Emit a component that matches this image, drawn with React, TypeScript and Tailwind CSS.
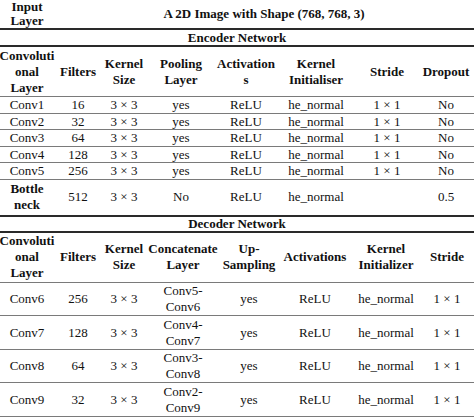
import React from "react";

const encCols = "grid grid-cols-[54px_48px_44px_70px_60px_80px_62px_56px]";
const decCols = "grid grid-cols-[54px_48px_44px_74px_58px_74px_68px_54px]";

const thick = "border-b-2 border-[#2a2a2a]";
const thin = "border-b border-[#7a7a7a]";

type Cell = React.ReactNode;

function Row({ cols, cells, className, bold }: { cols: string; cells: Cell[]; className: string; bold?: boolean }) {
  return (
    <div className={`${cols} ${className}`}>
      {cells.map((c, i) => (
        <div key={i} className={`flex items-center justify-center text-center ${bold ? "font-bold" : ""}`}>
          <span>{c}</span>
        </div>
      ))}
    </div>
  );
}

const encoderRows: Cell[][] = [
  ["Conv1", "16", "3 × 3", "yes", "ReLU", "he_normal", "1 × 1", "No"],
  ["Conv2", "32", "3 × 3", "yes", "ReLU", "he_normal", "1 × 1", "No"],
  ["Conv3", "64", "3 × 3", "yes", "ReLU", "he_normal", "1 × 1", "No"],
  ["Conv4", "128", "3 × 3", "yes", "ReLU", "he_normal", "1 × 1", "No"],
  ["Conv5", "256", "3 × 3", "yes", "ReLU", "he_normal", "1 × 1", "No"],
];

const decoderRows: Cell[][] = [
  ["Conv6", "256", "3 × 3", <>Conv5-<br />Conv6</>, "yes", "ReLU", "he_normal", "1 × 1"],
  ["Conv7", "128", "3 × 3", <>Conv4-<br />Conv7</>, "yes", "ReLU", "he_normal", "1 × 1"],
  ["Conv8", "64", "3 × 3", <>Conv3-<br />Conv8</>, "yes", "ReLU", "he_normal", "1 × 1"],
  ["Conv9", "32", "3 × 3", <>Conv2-<br />Conv9</>, "yes", "ReLU", "he_normal", "1 × 1"],
];

export default function App() {
  return (
    <div
      className="w-[474px] h-[417px] overflow-hidden bg-white text-[#111111] text-[13px] leading-[16px]"
      style={{ fontFamily: '"Liberation Serif", "Times New Roman", serif' }}
    >
      {/* Input row */}
      <div className={`flex h-[30px] ${thick}`}>
        <div className="w-[54px] flex items-center justify-center text-center font-bold leading-[14px]">
          <span>Input<br />Layer</span>
        </div>
        <div className="flex-1 flex items-center justify-center font-bold">
          A 2D Image with Shape (768, 768, 3)
        </div>
      </div>

      {/* Encoder */}
      <div className={`h-[17px] flex items-center justify-center font-bold ${thick}`}>Encoder Network</div>
      <Row
        cols={encCols}
        bold
        className={`h-[50px] ${thin}`}
        cells={[
          <>Convoluti<br />onal<br />Layer</>,
          "Filters",
          <>Kernel<br />Size</>,
          <>Pooling<br />Layer</>,
          <>Activation<br />s</>,
          <>Kernel<br />Initialiser</>,
          "Stride",
          "Dropout",
        ]}
      />
      {encoderRows.map((r, i) => (
        <Row key={i} cols={encCols} className={`h-[16.6px] ${thin}`} cells={r} />
      ))}
      <div className={`${encCols} h-[37px] ${thick}`}>
        <div className="flex items-center justify-center text-center font-bold">
          <span>Bottle<br />neck</span>
        </div>
        {["512", "3 × 3", "No", "ReLU", "he_normal", "", "0.5"].map((c, i) => (
          <div key={i} className="flex items-center justify-center">{c}</div>
        ))}
      </div>

      {/* Decoder */}
      <div className={`h-[16px] flex items-center justify-center font-bold ${thick}`}>Decoder Network</div>
      <Row
        cols={decCols}
        bold
        className={`h-[50px] ${thin}`}
        cells={[
          <>Convoluti<br />onal<br />Layer</>,
          "Filters",
          <>Kernel<br />Size</>,
          <>Concatenate<br />Layer</>,
          <>Up-<br />Sampling</>,
          "Activations",
          <>Kernel<br />Initializer</>,
          "Stride",
        ]}
      />
      {decoderRows.map((r, i) => (
        <Row key={i} cols={decCols} className={`h-[33.5px] ${thin}`} cells={r} />
      ))}
    </div>
  );
}
